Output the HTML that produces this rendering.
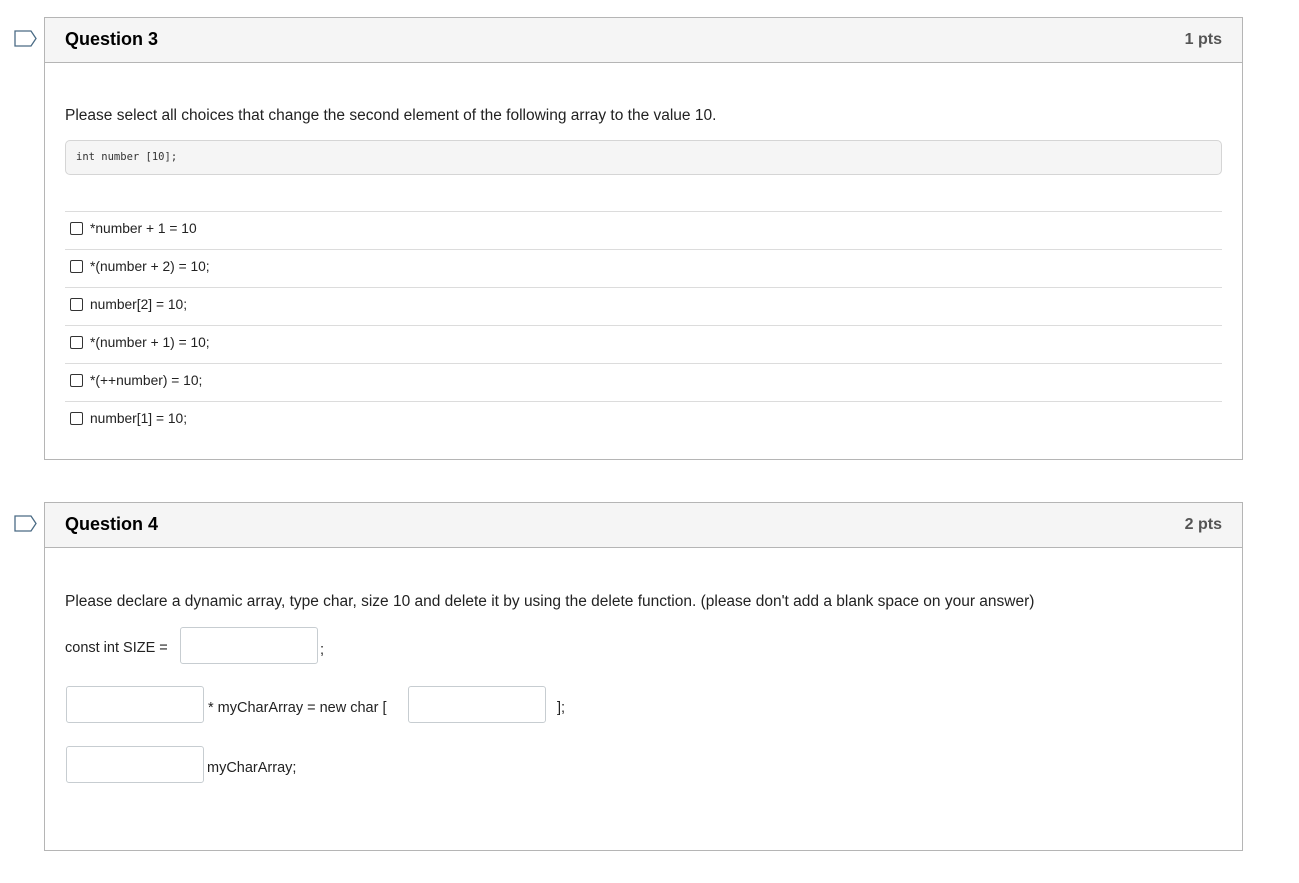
<!DOCTYPE html><html><head><style>
body{margin:0;width:1299px;height:883px;background:#fff;font-family:"Liberation Sans",sans-serif;color:#2d3b45;position:relative;overflow:hidden}
.a{position:absolute}
.box{position:absolute;left:44px;width:1197px;border:1px solid #b5b5b5}
.hd{position:absolute;left:0;top:0;right:0;height:44px;background:#f5f5f5;border-bottom:1px solid #b5b5b5}
.t{position:absolute;left:20px;top:11px;font-size:18px;font-weight:bold;color:#000}
.p{position:absolute;right:20px;top:13px;font-size:16px;font-weight:bold;color:#555}
.ln{position:absolute;left:65px;width:1157px;border-top:1px solid #dcdcdc}
.cb{position:absolute;left:70px;width:11px;height:11px;border:1px solid #333;border-radius:2px;background:#fff}
.lb{position:absolute;left:90px;font-size:13.8px;color:#222}
.in{position:absolute;border:1px solid #c7cdd1;border-radius:3px;background:#fff;height:35px;width:136px}
.tx{font-size:14.5px;color:#222}
.big{font-size:15.5px}
</style></head><body>
<svg class="a" style="left:14px;top:30px" width="24" height="18"><path d="M1 1H17L22 8.5L17 16H1Z" fill="none" stroke="#4a6b85" stroke-width="1.3"/></svg>
<svg class="a" style="left:14px;top:515px" width="24" height="18"><path d="M1 1H17L22 8.5L17 16H1Z" fill="none" stroke="#4a6b85" stroke-width="1.3"/></svg>
<div class="box" style="top:17px;height:441px"><div class="hd"><div class="t">Question 3</div><div class="p">1 pts</div></div></div>
<div class="a tx big" style="left:65px;top:107px">Please select all choices that change the second element of the following array to the value 10.</div>
<div class="a" style="left:65px;top:140px;width:1155px;height:33px;background:#f5f5f5;border:1px solid #d5d5d5;border-radius:5px"><span style="position:absolute;left:10px;top:10px;font-family:'DejaVu Sans Mono',monospace;font-size:10.5px;color:#333">int number [10];</span></div>
<div class="ln" style="top:211px"></div><div class="ln" style="top:249px"></div><div class="ln" style="top:287px"></div><div class="ln" style="top:325px"></div><div class="ln" style="top:363px"></div><div class="ln" style="top:401px"></div>
<div class="cb" style="top:222px"></div><div class="lb" style="top:221px">*number + 1 = 10</div>
<div class="cb" style="top:260px"></div><div class="lb" style="top:259px">*(number + 2) = 10;</div>
<div class="cb" style="top:298px"></div><div class="lb" style="top:297px">number[2] = 10;</div>
<div class="cb" style="top:336px"></div><div class="lb" style="top:335px">*(number + 1) = 10;</div>
<div class="cb" style="top:374px"></div><div class="lb" style="top:373px">*(++number) = 10;</div>
<div class="cb" style="top:412px"></div><div class="lb" style="top:411px">number[1] = 10;</div>
<div class="box" style="top:502px;height:347px"><div class="hd"><div class="t">Question 4</div><div class="p">2 pts</div></div></div>
<div class="a tx big" style="left:65px;top:593px">Please declare a dynamic array, type char, size 10 and delete it by using the delete function. (please don't add a blank space on your answer)</div>
<div class="a tx" style="left:65px;top:640px">const int SIZE =</div>
<div class="in" style="left:180px;top:627px"></div><div class="a tx" style="left:320px;top:642px">;</div>
<div class="in" style="left:66px;top:686px"></div>
<div class="a tx" style="left:208px;top:700px">* myCharArray = new char [</div>
<div class="in" style="left:408px;top:686px"></div><div class="a tx" style="left:557px;top:700px">];</div>
<div class="in" style="left:66px;top:746px"></div>
<div class="a tx" style="left:207px;top:760px">myCharArray;</div>
</body></html>
